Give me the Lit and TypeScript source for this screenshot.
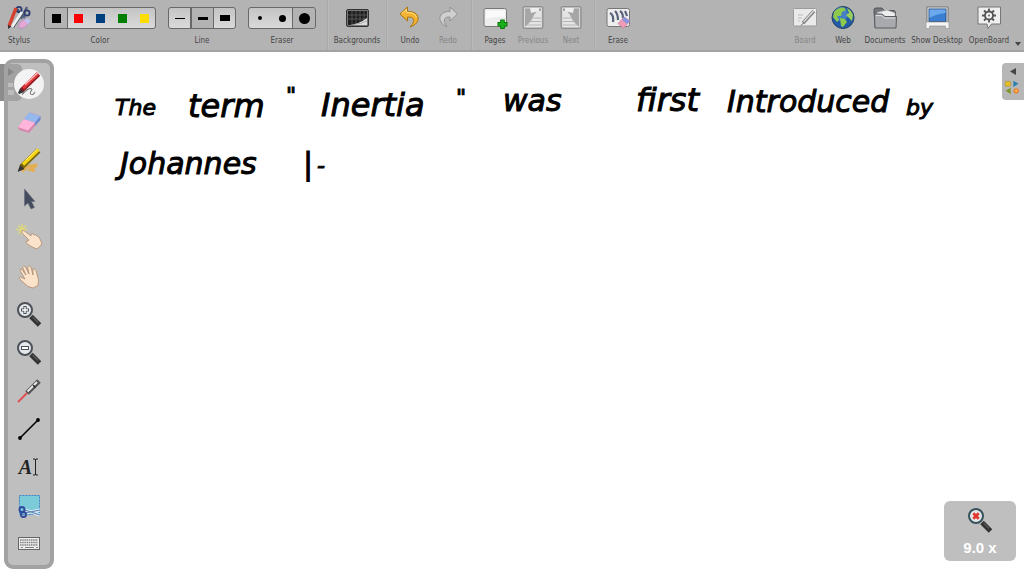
import { LitElement, html, svg, css } from "lit";
import { customElement, property } from "lit/decorators.js";

const lens = (inner: unknown, ring = "#4c5058") => svg`
  <path d="M16 16.500 L24.500 25" stroke="#333" stroke-width="5"/>
  <path d="M17.500 17 L23 22.400" stroke="#777" stroke-width="1"/>
  <circle cx="10" cy="10" r="7" fill="#e4e8ea" stroke=${ring} stroke-width="2"/>
  ${inner}`;

const HAND = "#fbe3cb";

const icons: Record<string, unknown> = {
  stylus: svg`
    <path d="M16 15 L22 3 M12 5 L20 14" stroke="#53617f" stroke-width="2.4"/>
    <circle cx="14" cy="5.500" r="2.6" fill="none" stroke="#2c3c70" stroke-width="1.8"/>
    <circle cx="22" cy="9" r="2.6" fill="none" stroke="#2c3c70" stroke-width="1.8"/>
    <path d="M11 4 L4 22" stroke="#d6412f" stroke-width="3.4"/>
    <path d="M17 8 L7 23" stroke="#eceff2" stroke-width="3"/>
    <path d="M18.500 9 L8.500 24" stroke="#555b66" stroke-width="1"/>
    <path d="M3 21 L3 25 L6.500 22.500" fill="#333"/>
    <path d="M15 18 L21 14.500 L25 18 L19 24 L13 24z" fill="#e6a6d2" stroke="#a98fc6" stroke-width=".7"/>
    <path d="M19 16.500 L23 14 L26 17 L23 20z" fill="#b9c3ee"/>`,
  backgrounds: svg`
    <rect x="3.500" y="5.500" width="22" height="17" rx="1.500" fill="#777" stroke="#333"/>
    <rect x="5" y="7" width="19" height="14" fill="#1f1f1f"/>
    <path d="M5 11H24M5 15H24M9 7V21M13 7V21M17 7V21M21 7V21" stroke="#666" stroke-width=".7"/>
    <path d="M7 21 Q16 20 24 14 V21z" fill="#ddd"/><path d="M10 20.500 Q18 20 24 17" fill="none" stroke="#999" stroke-width=".7"/>`,
  undo: svg`<path d="M4 10 L11.500 3 V7.500 C19 7 23 11 22 16 Q20.500 21 14 23 Q19 18 17.500 15 Q16 12.500 11.500 13 V17z" fill="#f5b32f" stroke="#a87516" stroke-width="1" stroke-linejoin="round"/><path d="M5.500 9.800 L10.500 5.500 V8.500 Q18 8 20.500 13" fill="none" stroke="#ffe08a" stroke-width="1"/>`,
  redo: svg`<path d="M23.500 10 L16 3 V7.500 C9 7 5 11 6 16 Q7.500 21 13 23 Q9 18 10.500 15 Q12 12.500 16 13 V17z" fill="#cfcfcf" stroke="#929292" stroke-width="1" stroke-linejoin="round"/>`,
  pages: svg`<rect x="3" y="4.500" width="22.500" height="18" rx="2" fill="#ededed" stroke="#777"/><path d="M5 6.500H24V13Q14 12 5 15z" fill="#fafafa"/><path d="M21.500 15.500V25M16.500 20.300H26.500" stroke="#087808" stroke-width="4.600"/><path d="M21.500 16.500V24M17.500 20.300H25.500" stroke="#18b11c" stroke-width="2.800"/>`,
  previous: svg`<rect x="4" y="2.500" width="20" height="22" rx="1.500" fill="#a6a6a6" stroke="#8e8e8e"/><path d="M5.500 4H22.500V23H5.500z" fill="none" stroke="#d8d8d8"/><path d="M18 7 H22 V23 H6 L12 17 L15 11z" fill="#e4e4e4"/><path d="M12 9 L11 4 L20 4 L20 7z" fill="#eee"/><path d="M14 14H22M11 17.500H22M8 21H22" stroke="#b5b5b5"/>`,
  next: svg`<rect x="4" y="2.500" width="20" height="22" rx="1.500" fill="#a6a6a6" stroke="#8e8e8e"/><path d="M5.500 4H22.500V23H5.500z" fill="none" stroke="#d8d8d8"/><path d="M10 7 H6 V23 H22 L16 17 L13 11z" fill="#e4e4e4"/><path d="M16 9 L17 4 L8 4 L8 7z" fill="#eee"/><path d="M6 14H14M6 17.500H17M6 21H20" stroke="#b5b5b5"/>`,
  erase: svg`<rect x="3" y="4.500" width="22.500" height="18" rx="2" fill="#ededed" stroke="#777"/><path d="M6 9 Q10 11 9 18M11 7 Q14 10 14 16M16 7 Q19 9 19 14M21 7 Q22 9 23 12" stroke="#59647c" stroke-width="2.200" fill="none"/><path d="M14 19.500 L20 13 L26 17 L19.500 24.500z" fill="#ee9bb8" stroke="#bd7698" stroke-width=".6"/><path d="M18 15.500 L20.500 13 L26 17 L23 20z" fill="#8795dc"/>`,
  board: svg`<rect x="2.500" y="4.500" width="23" height="17.500" rx="1" fill="#eaeaea" stroke="#9c9c9c"/><path d="M7 11H12M7 14H11M7 17H9" stroke="#bbb"/><path d="M12 19 L23 7" stroke="#808080" stroke-width="3.400"/><path d="M12.500 18 L23 6.500" stroke="#ddd" stroke-width="1.300"/><path d="M10 21.500 L13 18.500" stroke="#666"/>`,
  web: svg`<circle cx="14" cy="13.500" r="11" fill="#235ba8" stroke="#254063" stroke-width="1"/><circle cx="12" cy="10" r="7" fill="#5c99d7" opacity=".6"/><path d="M5 8 Q9 3 15 3.500 L17 6 L13 8 L12 12 L8 12 L10 16 L8 18 L4 13z" fill="#8dc94c"/><path d="M11 14 L16 15 L18 18 L14 23 L12 22z" fill="#8dc94c"/><path d="M18 4 Q22 6 24 11 L23 17 L19 13 L17 11 L20 9z" fill="#9ccf5c"/>`,
  documents: svg`<path d="M3 6 Q3 4 5 4H11L13 6.500H23Q24.500 7 24.500 9V23H4z" fill="#73777b" stroke="#505458"/><path d="M6 8.500 L16 6 L24 9 V19H6z" fill="#eee" stroke="#aaa" stroke-width=".6"/><path d="M3.500 10H11L14 12.500H25.500L25 24H4z" fill="#a8aaae" stroke="#595d61"/><path d="M5 11.500H10.500L13.500 14H24" fill="none" stroke="#ddd"/>`,
  desktop: svg`<path d="M4 3H25V20H4z" fill="#f1f1f1" stroke="#707070"/><rect x="6" y="5" width="17" height="12.500" fill="#3a7fd2" stroke="#2c4f80"/><path d="M6.500 5.500H22.500V9Q13 10 6.500 14z" fill="#6ba9ec"/><path d="M3 18H26V24.500H22.500V22H6.500V24.500H3z" fill="#f5f5f5" stroke="#999" stroke-width=".7"/>`,
  openboard: svg`<path d="M3 3H25.500V20H16.500L13 24.500L12 20H3z" fill="#efefef" stroke="#777" stroke-linejoin="round"/><circle cx="14" cy="11.500" r="4" fill="none" stroke="#555" stroke-width="1.800"/><circle cx="14" cy="11.500" r="1" fill="#666"/><path d="M14 4.500V7.500M14 15.500V18.500M7 11.500H10M18 11.500H21M9 6.500L11 8.500M17 14.500L19 16.500M19 6.500L17 8.500M11 14.500L9 16.500" stroke="#555" stroke-width="1.800"/>`,
  pen: svg`<path d="M7 24.500 Q15 16 17 19.500 Q13 25 18 24.500 L20 22" fill="none" stroke="#777" stroke-width="1.100"/><path d="M6.500 20.500 L23.500 4" stroke="#8d1820" stroke-width="4.800"/><path d="M8 18 L23.500 3" stroke="#e23b3f" stroke-width="3.200"/><path d="M10 14.500 L23.500 2" stroke="#ffc5c2" stroke-width="1.200"/><path d="M2 25 L5 18.500 L9 22z" fill="#343434"/>`,
  eraser: svg`<path d="M3 19 L13 6 Q14 4.500 15.500 4.500 L25.500 8 L25 12 L14 25 L4 22z" fill="#d887af"/><path d="M3 19 L9 11 L20 14.500 L13 22.500z" fill="#ffb5da"/><path d="M9 11 L14 4.500 L25.500 8 L20 14.500z" fill="#93b9ef"/><path d="M20 14.500 L25.500 8 V12 L20 18z" fill="#668bd0"/>`,
  marker: svg`<path d="M7 24.500 Q13 18 16 19 L22 18 L15 22.500 L20 23.500" fill="none" stroke="#efa92d" stroke-width="3" opacity=".75"/><path d="M6.500 20 L23.500 3.500" stroke="#776508" stroke-width="5.400"/><path d="M8 17.500 L23.500 2.500" stroke="#f5d317" stroke-width="3.600"/><path d="M11 13 L22.500 2" stroke="#fff07a" stroke-width="1"/><path d="M2.500 25 L5 18 L9.500 22z" fill="#343434"/>`,
  arrow: svg`<path d="M9.500 4 V21 L13 18 L16 24 L19.500 22.500 L16.500 16.500 H20z" fill="#454b5e" stroke="#686e7e" stroke-width=".6"/>`,
  pointer: svg`<path d="M7 1V12M1 6.500H12M3 2.500L11 10.500M11 2.500L3 10.500" stroke="#dcd77c" stroke-width="1.500"/><path d="M7 8 Q8 6.500 9.500 8 L16 13 L16 11 Q18 9.500 19 12 Q21 11 22 13 Q24 13 25 16 L27 21 L22 26 L17 24 L11 20 Q10 18 13 18 L14 17 L7 10z" fill=${HAND} stroke="#b08a6c" stroke-width=".8"/>`,
  hand: svg`<path d="M13 24.500 L5 17.500 Q3.500 15 5.500 15 L10 17 L5 8.500 Q5 6.500 7 7.500 L11 13 L7.500 5 Q8.500 3 10.500 5 L14 12 L12.500 4.500 Q14 3 16 5 L18 13 L18 7 Q20 6 21 8.500 L23.500 18 L23 23.500 L18 26z" fill=${HAND} stroke="#b08a6c" stroke-width=".8"/>`,
  zoomIn: lens(svg`<path d="M10 6V14M6 10H14" stroke="#4c5058" stroke-width="3.200"/><path d="M10 7V13M7 10H13" stroke="#fff" stroke-width="1.400"/>`),
  zoomOut: lens(svg`<rect x="6.500" y="8.500" width="7" height="3" fill="#fff" stroke="#4c5058"/>`),
  zoomReset: lens(svg`<path d="M7.300 7.300L12.700 12.700M12.700 7.300L7.300 12.700" stroke="#e2372e" stroke-width="2.800"/>`, "#36515a"),
  laser: svg`<path d="M3 25 L14 14" stroke="#e04d4d" stroke-width="1.800"/><path d="M12 16 L24 4" stroke="#555" stroke-width="5"/><path d="M12.500 14.500 L22 5" stroke="#e7e7e7" stroke-width="2"/><path d="M18 8L20.500 10.500" stroke="#222" stroke-width="1.500"/>`,
  line: svg`<path d="M5 23L23 5" stroke="#000" stroke-width="1.600"/><circle cx="5" cy="23" r="1.900"/><circle cx="23" cy="5" r="1.900"/>`,
  capture: svg`<rect x="4.500" y="3.500" width="20" height="19" fill="#7bcbd8" stroke="#3d83c6" stroke-dasharray="2 1"/><path d="M10 18 L25 23 M10 21 L25 18" stroke="#dceaf5" stroke-width="3"/><path d="M10 18 L25 23 M10 21 L25 18" stroke="#5880b0" stroke-width="1.200"/><circle cx="7" cy="17.500" r="2.500" fill="none" stroke="#304a9c" stroke-width="2"/><circle cx="8.500" cy="22.500" r="2.500" fill="none" stroke="#304a9c" stroke-width="2"/>`,
  keyboard: svg`<rect x="3.500" y="7.500" width="21" height="12" fill="#eee" stroke="#666"/><path d="M5 10H23M5 12.500H23M5 15H23" stroke="#808080" stroke-width="1.300" stroke-dasharray="1.500 .7"/><path d="M6 17.500H8M10 17.500H19M21 17.500H23" stroke="#808080"/>`,
  library: svg`<rect x="4" y="5" width="7" height="6" rx="1" fill="#e9bf26" stroke="#9a8020" stroke-width=".6"/><path d="M14.500 4V12L21 8z" fill="#277fae"/><path d="M11 13V21L4.500 17z" fill="#7b9729"/><circle cx="18" cy="17" r="2.400" fill="#ffd36b" stroke="#f0812a" stroke-width="2"/>`,
};

const glyph = (name: string) => html`<svg viewBox="0 0 28 28" aria-hidden="true">${icons[name]}</svg>`;

@customElement("tool-button")
class ToolButton extends LitElement {
  @property() icon = "";
  @property() label = "";
  @property({ type: Boolean }) disabled = false;

  static styles = css`
    :host { display: block; flex: none; }
    .tool {
      width: 100%; padding: 4px 0 0; border: 0; background: none; color: #454545;
      display: flex; flex-direction: column; align-items: center; gap: 3px;
      font: 8px/12px "DejaVu Sans Condensed", "DejaVu Sans", sans-serif; white-space: nowrap;
    }
    .tool:disabled { color: #858585; }
    svg { width: 28px; height: 28px; display: block; }
  `;

  render() {
    return html`<button class="tool" ?disabled=${this.disabled}>${glyph(this.icon)}<span>${this.label}</span></button>`;
  }
}

interface Choice { name: string; size: string; color?: string; }

@customElement("choice-group")
class ChoiceGroup extends LitElement {
  @property() label = "";
  @property({ type: Number }) selected = 0;
  @property({ attribute: false }) choices: Choice[] = [];

  static styles = css`
    :host { display: block; flex: none; }
    .group { padding: 7px 0 0; display: flex; flex-direction: column; align-items: center; gap: 6px; }
    .cells { display: flex; border: 1px solid #686868; border-radius: 3px; overflow: hidden; background: linear-gradient(#c4c4c4, #dadada); }
    .cell { width: 22px; height: 20px; display: grid; place-items: center; box-sizing: border-box; }
    .ruled .cell + .cell { border-left: 1px solid #686868; }
    .cell:has(:checked) { background: #b3b3b3; box-shadow: 0 0 0 1px #686868; }
    input { appearance: none; margin: 0; background: #000; }
    .swatch { width: 9px; height: 9px; }
    .thin { width: 10px; height: 1px; }
    .medium { width: 10px; height: 3px; }
    .thick { width: 10px; height: 6px; }
    .small { width: 4px; height: 4px; border-radius: 50%; }
    .middle { width: 7px; height: 7px; border-radius: 50%; }
    .large { width: 11px; height: 11px; border-radius: 50%; }
    .caption { font: 8px/12px "DejaVu Sans Condensed", "DejaVu Sans", sans-serif; color: #454545; }
  `;

  render() {
    return html`<div class="group" role="radiogroup" aria-labelledby="caption">
      <div class="cells ${this.label === "Line" ? "ruled" : ""}">
        ${this.choices.map((c, i) => html`<label class="cell"><input type="radio" name="choice" class=${c.size}
          aria-label=${c.name} style=${c.color ? `background:${c.color}` : ""} ?checked=${i === this.selected}></label>`)}
      </div>
      <span class="caption" id="caption">${this.label}</span>
    </div>`;
  }
}

const colors: Choice[] = [
  { name: "Black", size: "swatch", color: "#000" },
  { name: "Red", size: "swatch", color: "#f00" },
  { name: "Blue", size: "swatch", color: "#00407f" },
  { name: "Green", size: "swatch", color: "#008000" },
  { name: "Yellow", size: "swatch", color: "#fd0" },
];
const lines: Choice[] = [{ name: "Thin", size: "thin" }, { name: "Medium", size: "medium" }, { name: "Thick", size: "thick" }];
const erasers: Choice[] = [{ name: "Small", size: "small" }, { name: "Medium", size: "middle" }, { name: "Large", size: "large" }];

const palette: [string, string][] = [
  ["pen", "Pen"], ["eraser", "Eraser"], ["marker", "Highlighter"], ["arrow", "Select"], ["pointer", "Interact"],
  ["hand", "Scroll page"], ["zoomIn", "Zoom in"], ["zoomOut", "Zoom out"], ["laser", "Laser pointer"],
  ["line", "Draw line"], ["text", "Write text"], ["capture", "Capture"], ["keyboard", "Keyboard"],
];

// Handwritten words and where each sits on the board.
const words: { text: string; x: number; y: number; size?: "small" | "big" }[] = [
  { text: "The", x: 115, y: 38, size: "small" },
  { text: "term", x: 188, y: 36, size: "big" },
  { text: "\"", x: 286, y: 26, size: "small" },
  { text: "Inertia", x: 321, y: 35, size: "big" },
  { text: "\"", x: 456, y: 28, size: "small" },
  { text: "was", x: 503, y: 31 },
  { text: "first", x: 636, y: 30, size: "big" },
  { text: "Introduced", x: 727, y: 32 },
  { text: "by", x: 906, y: 38, size: "small" },
  { text: "Johannes", x: 120, y: 94 },
  { text: "|", x: 303, y: 94 },
  { text: "-", x: 317, y: 96, size: "small" },
];

@customElement("app-root")
class AppRoot extends LitElement {
  static styles = css`
    :host { display: flex; flex-direction: column; min-height: 100vh; background: #fff; overflow: hidden; font-family: "DejaVu Sans", sans-serif; }
    .toolbar { display: flex; justify-content: space-between; height: 50px; background: #b3b3b3; border-bottom: 2px solid #a2a2a2; }
    .left, .right { display: flex; }
    .choices { display: flex; gap: 12px; padding: 0 11px 0 6px; }
    .set { display: flex; border-left: 1px solid #a9a9a9; box-shadow: inset 1px 0 #bababa; }
    .padded { padding: 0 4px; }
    .w38 { width: 38px; }
    .w46 { width: 46px; }
    .w58 { width: 58px; }
    .more { width: 12px; padding: 0; border: 0; background: none; display: flex; align-items: flex-end; justify-content: center; }
    .more svg { width: 8px; height: 8px; margin-bottom: 2px; }
    .board { position: relative; flex: 1; }
    .word { position: absolute; margin: 0; font: italic 30px/36px "DejaVu Sans", sans-serif; -webkit-text-stroke: 1px #000; color: #000; white-space: nowrap; }
    .word.small { font-size: 22px; }
    .word.big { font-size: 32px; }
    .tab { position: absolute; top: 12px; left: 0; width: 22px; height: 37px; border: 0; padding: 0; background: #8c8c8c; border-radius: 0 5px 5px 0; }
    .tab svg { width: 22px; height: 37px; display: block; }
    .palette {
      position: absolute; left: 4px; top: 7px; bottom: 7px; width: 50px; box-sizing: border-box;
      border: 4px solid #a2a2a2; border-radius: 9px; background: rgba(170, 170, 170, 0.75);
      padding: 2px 0; display: flex; flex-direction: column;
    }
    .item { flex: 1; min-height: 0; padding: 0; border: 0; background: none; display: grid; place-items: center; }
    .item svg { width: 28px; height: 28px; display: block; }
    .active svg { background: #f3f3f3; border-radius: 50%; box-shadow: 0 0 0 1px #f3f3f3; }
    .write { display: flex; align-items: center; font: italic bold 20px/24px "Liberation Serif", serif; color: #222; }
    .item .beam { width: 7px; height: 18px; }
    .library {
      position: absolute; right: 0; top: 11px; width: 22px; height: 37px; padding: 2px 0 0; border: 0;
      border-radius: 4px 0 0 4px; background: #b7b7b7; display: flex; flex-direction: column; align-items: center;
    }
    .library svg { width: 22px; height: 24px; }
    .library .fold { width: 8px; height: 12px; flex: none; }
    .zoom {
      position: absolute; right: 8px; bottom: 15px; width: 72px; height: 60px; padding: 5px 0 0; border: 0;
      border-radius: 6px; background: #bfbfbf; display: flex; flex-direction: column; align-items: center; gap: 2px;
      color: #fff; font: bold 15px/24px "Liberation Sans", sans-serif;
    }
    .zoom svg { width: 28px; height: 28px; flex: none; }
  `;

  render() {
    return html`
      <header class="toolbar">
        <div class="left">
          <tool-button class="w38" icon="stylus" label="Stylus"></tool-button>
          <div class="choices">
            <choice-group label="Color" .choices=${colors} selected="0"></choice-group>
            <choice-group label="Line" .choices=${lines} selected="1"></choice-group>
            <choice-group label="Eraser" .choices=${erasers} selected="2"></choice-group>
          </div>
          <div class="set"><tool-button class="w58" icon="backgrounds" label="Backgrounds"></tool-button></div>
          <div class="set padded">
            <tool-button class="w38" icon="undo" label="Undo"></tool-button>
            <tool-button class="w38" icon="redo" label="Redo" disabled></tool-button>
          </div>
          <div class="set padded">
            <tool-button class="w38" icon="pages" label="Pages"></tool-button>
            <tool-button class="w38" icon="previous" label="Previous" disabled></tool-button>
            <tool-button class="w38" icon="next" label="Next" disabled></tool-button>
          </div>
          <div class="set padded"><tool-button class="w38" icon="erase" label="Erase"></tool-button></div>
        </div>
        <nav class="right">
          <tool-button class="w38" icon="board" label="Board" disabled></tool-button>
          <tool-button class="w38" icon="web" label="Web"></tool-button>
          <tool-button class="w46" icon="documents" label="Documents"></tool-button>
          <tool-button class="w58" icon="desktop" label="Show Desktop"></tool-button>
          <tool-button class="w46" icon="openboard" label="OpenBoard"></tool-button>
          <button class="more" aria-label="More"><svg viewBox="0 0 8 8"><path d="M1 2H7L4 6z" fill="#444"/></svg></button>
        </nav>
      </header>
      <main class="board">
        ${words.map((w) => html`<p class="word ${w.size ?? ""}" style="left:${w.x}px;top:${w.y}px">${w.text}</p>`)}
        <button class="tab" aria-label="Page list"><svg viewBox="0 0 22 37"><path d="M8 4L14 8L8 12z" fill="#222"/><path d="M8 19h5v4H8zM8 26h6v5H8z" fill="#f5f5f5"/></svg></button>
        <aside class="palette">
          ${palette.map(([icon, name]) => html`<button class="item ${icon === "pen" ? "active" : ""}" aria-label=${name}>
            ${icon === "text"
              ? html`<span class="write">A<svg class="beam" viewBox="0 0 7 18"><path d="M1 1H3L3.500 2L4 1H6M3.500 1V17M1 17H3L3.500 16L4 17H6" fill="none" stroke="#222"/></svg></span>`
              : glyph(icon)}
          </button>`)}
        </aside>
        <button class="library" aria-label="Library">
          <svg class="fold" viewBox="0 0 8 12"><path d="M7 3V10L1 6.500z" fill="#444"/></svg>${glyph("library")}
        </button>
        <button class="zoom" aria-label="Reset zoom, 9.0 x">${glyph("zoomReset")}<span>9.0 x</span></button>
      </main>`;
  }
}
